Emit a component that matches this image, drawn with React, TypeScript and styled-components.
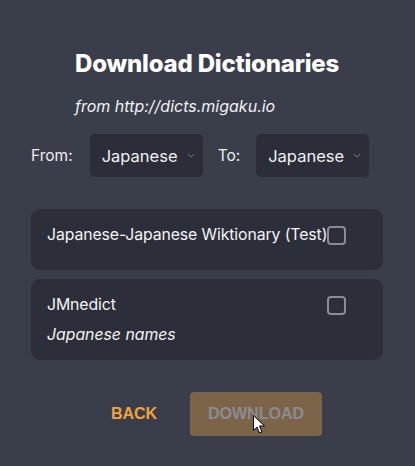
import React from "react";
import styled, { createGlobalStyle } from "styled-components";

const Global = createGlobalStyle`
  body {
    margin: 0;
    background: #3a3e4a;
    font-family: "Inter", "Noto Sans", sans-serif;
    color: #f2f3f5;
  }
`;

const dicts = [
  { name: "Japanese-Japanese Wiktionary (Test)", desc: "" },
  { name: "JMnedict", desc: "Japanese names" },
];

const App = () => {
  return (
    <Page>
      <Global />
      <Header>
        <Title>Download Dictionaries</Title>
        <Source>from http://dicts.migaku.io</Source>
      </Header>

      <LangRow>
        <Label>From:</Label>
        <Select>
          Japanese
          <Chevron />
        </Select>
        <Label $lead>To:</Label>
        <Select>
          Japanese
          <Chevron />
        </Select>
      </LangRow>

      <List>
        {dicts.map((d) => (
          <Card key={d.name} $tall={!!d.desc}>
            <CardText>
              <CardName>{d.name}</CardName>
              {d.desc && <CardDesc>{d.desc}</CardDesc>}
            </CardText>
            <Check />
          </Card>
        ))}
      </List>

      <Actions>
        <BackButton>BACK</BackButton>
        <DownloadButton>
          DOWNLOAD
          <Cursor />
        </DownloadButton>
      </Actions>
    </Page>
  );
};

export default App;

const Chevron = () => (
  <ChevronSvg viewBox="0 0 10 6" width="8" height="5">
    <path d="M1 1l4 4 4-4" fill="none" stroke="#7d818c" strokeWidth="1.2" />
  </ChevronSvg>
);

const Cursor = () => (
  <CursorSvg viewBox="0 0 12 19" width="12" height="19">
    <path
      d="M0.5 0.5 L0.5 15.5 L4 12 L6.5 18 L9 17 L6.5 11 L11.5 11 Z"
      fill="#fff"
      stroke="#000"
      strokeWidth="1"
      strokeLinejoin="miter"
    />
  </CursorSvg>
);

const Page = styled.div`
  width: 415px;
  height: 466px;
  box-sizing: border-box;
  padding: 49px 32px 0 31px;
`;

const Header = styled.div`
  width: fit-content;
  margin: 0 auto;
  display: flex;
  flex-direction: column;
`;

const Title = styled.div`
  font-size: 24px;
  font-weight: 800;
  line-height: 30px;
  color: #ffffff;
  letter-spacing: -0.2px;
`;

const Source = styled.div`
  margin-top: 17px;
  font-size: 16px;
  font-style: italic;
  line-height: 20px;
  color: #f0f1f3;
`;

const LangRow = styled.div`
  margin-top: 18px;
  display: flex;
  align-items: center;
`;

const Label = styled.div<{ $lead?: boolean }>`
  font-size: 15.5px;
  color: #eceef1;
  margin-left: ${(p) => (p.$lead ? 15 : 0)}px;
  margin-right: ${(p) => (p.$lead ? 16 : 17)}px;
`;

const Select = styled.div`
  width: 113px;
  height: 43px;
  box-sizing: border-box;
  padding: 0 8px 0 12px;
  border-radius: 5px;
  background: #2b2e38;
  display: flex;
  align-items: center;
  justify-content: space-between;
  font-size: 16.5px;
  color: #eef0f3;
`;

const ChevronSvg = styled.svg`
  display: block;
`;

const List = styled.div`
  margin-top: 32px;
  display: flex;
  flex-direction: column;
  gap: 9px;
`;

const Card = styled.div<{ $tall: boolean }>`
  height: ${(p) => (p.$tall ? 81 : 61)}px;
  box-sizing: border-box;
  padding: 16px 37px 0 16px;
  border-radius: 9px;
  background: #2c2f39;
  display: flex;
  align-items: flex-start;
`;

const CardText = styled.div`
  flex: 1;
  min-width: 0;
  display: flex;
  flex-direction: column;
`;

const CardName = styled.div`
  font-size: 15.8px;
  line-height: 20px;
  color: #f3f4f6;
  white-space: nowrap;
  letter-spacing: -0.1px;
`;

const CardDesc = styled.div`
  margin-top: 10px;
  font-size: 15.8px;
  font-style: italic;
  line-height: 20px;
  color: #f3f4f6;
`;

const Check = styled.div`
  flex: none;
  width: 19px;
  height: 19px;
  box-sizing: border-box;
  margin-top: 1px;
  border: 2px solid #8a8d97;
  border-radius: 4px;
`;

const Actions = styled.div`
  margin-top: 32px;
  display: flex;
  justify-content: center;
  gap: 12px;
  padding-right: 2px;
`;

const ButtonBase = styled.div`
  height: 44px;
  box-sizing: border-box;
  border-radius: 4px;
  display: flex;
  align-items: center;
  justify-content: center;
  font-family: "Liberation Sans", Arial, sans-serif;
  font-size: 16px;
  font-weight: 700;
`;

const BackButton = styled(ButtonBase)`
  width: 88px;
  color: #f2a33c;
`;

const DownloadButton = styled(ButtonBase)`
  position: relative;
  width: 132px;
  background: #7c6448;
  color: #8b8c92;
`;

const CursorSvg = styled.svg`
  position: absolute;
  left: 63px;
  top: 23px;
`;
